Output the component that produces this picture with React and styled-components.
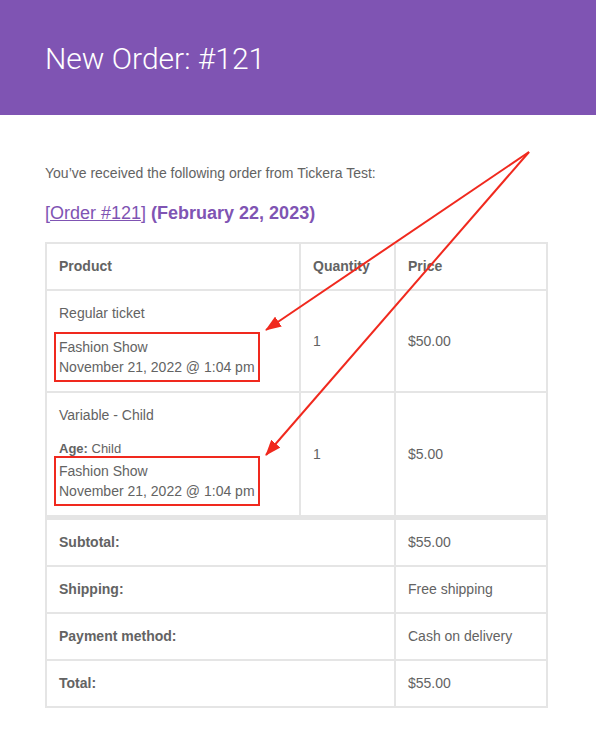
import React from 'react';
import styled, { createGlobalStyle } from 'styled-components';

const Global = createGlobalStyle`
  html, body { margin: 0; padding: 0; background: #ffffff; }
  body { font-family: "Liberation Sans", Arial, Helvetica, sans-serif; }
`;

const Page = styled.div`
  position: relative;
  width: 596px;
  min-height: 747px;
  background: #ffffff;
  color: #636363;
  font-size: 14px;
  overflow: hidden;
`;

const Header = styled.header`
  background: #7f54b3;
  height: 115px;
  box-sizing: border-box;
  padding: 2px 45px 0;
  display: flex;
  align-items: center;
`;

const Title = styled.h1`
  margin: 0;
  font-family: Roboto, "Liberation Sans", sans-serif;
  font-weight: 300;
  font-size: 30px;
  line-height: 1;
  color: #ffffff;
`;

const Body = styled.main`
  padding: 48px 48px 40px 45px;
`;

const Intro = styled.p`
  margin: 0 0 16px;
  line-height: 21px;
`;

const OrderHeading = styled.h2`
  margin: 0 0 16px;
  font-size: 18px;
  line-height: 26px;
  font-weight: bold;
  color: #7f54b3;
`;

const OrderLink = styled.a`
  color: inherit;
  font-weight: normal;
  text-decoration: underline;
`;

const Table = styled.table`
  width: 503px;
  border: 1px solid #e5e5e5;
  border-collapse: separate;
  border-spacing: 0;
  table-layout: fixed;
  color: #636363;
  font-size: 14px;
`;

const Th = styled.th`
  box-sizing: border-box;
  width: ${(p) => p.$w}px;
  border: 1px solid #e5e5e5;
  padding: 12px;
  text-align: left;
  vertical-align: middle;
  line-height: 21px;
  font-weight: bold;
`;

const Td = styled.td`
  box-sizing: border-box;
  border: 1px solid #e5e5e5;
  border-top-width: ${(p) => (p.$thick ? 4 : 1)}px;
  padding: 12px;
  text-align: left;
  vertical-align: middle;
  line-height: 21px;
  font-weight: ${(p) => (p.$bold ? 'bold' : 'normal')};
`;

const ItemName = styled.div`
  line-height: 20px;
`;

const ItemMeta = styled.div`
  margin-top: 15px;
  font-size: 13px;
  line-height: 18px;
`;

const MetaKey = styled.strong`
  font-weight: bold;
`;

const EventBlock = styled.div`
  width: fit-content;
  margin-top: ${(p) => p.$top}px;
  margin-bottom: 2px;
  line-height: 20px;
  outline: 2px solid #f0291e;
  outline-offset: 3px;
`;

const Annotations = styled.svg`
  position: absolute;
  left: 0;
  top: 0;
  width: 596px;
  height: 747px;
  pointer-events: none;
`;

const Event = ({ top }) => (
  <EventBlock $top={top}>
    <div>Fashion Show</div>
    <div>November 21, 2022 @ 1:04 pm</div>
  </EventBlock>
);

const totals = [
  ['Subtotal:', '$55.00'],
  ['Shipping:', 'Free shipping'],
  ['Payment method:', 'Cash on delivery'],
  ['Total:', '$55.00'],
];

export default function App() {
  return (
    <Page>
      <Global />
      <Header>
        <Title>New Order: #121</Title>
      </Header>
      <Body>
        <Intro>You’ve received the following order from Tickera Test:</Intro>
        <OrderHeading>
          <OrderLink href="#">[Order #121]</OrderLink> (February 22, 2023)
        </OrderHeading>
        <Table>
          <thead>
            <tr>
              <Th $w={254}>Product</Th>
              <Th $w={95}>Quantity</Th>
              <Th $w={152}>Price</Th>
            </tr>
          </thead>
          <tbody>
            <tr>
              <Td>
                <ItemName>Regular ticket</ItemName>
                <Event top={14} />
              </Td>
              <Td>1</Td>
              <Td>$50.00</Td>
            </tr>
            <tr>
              <Td>
                <ItemName>Variable - Child</ItemName>
                <ItemMeta>
                  <MetaKey>Age:</MetaKey> Child
                </ItemMeta>
                <Event top={3} />
              </Td>
              <Td>1</Td>
              <Td>$5.00</Td>
            </tr>
          </tbody>
          <tfoot>
            {totals.map(([label, value], i) => (
              <tr key={label}>
                <Td $bold $thick={i === 0} colSpan={2}>
                  {label}
                </Td>
                <Td $thick={i === 0}>{value}</Td>
              </tr>
            ))}
          </tfoot>
        </Table>
      </Body>
      <Annotations viewBox="0 0 596 747">
        <defs>
          <marker
            id="head"
            markerUnits="userSpaceOnUse"
            markerWidth="16"
            markerHeight="12"
            refX="15"
            refY="6"
            orient="auto"
          >
            <path d="M0,0 L16,6 L0,12 Z" fill="#f0291e" />
          </marker>
        </defs>
        <line x1="529" y1="152" x2="266" y2="330" stroke="#f0291e" strokeWidth="2" markerEnd="url(#head)" />
        <line x1="529" y1="152" x2="266" y2="455" stroke="#f0291e" strokeWidth="2" markerEnd="url(#head)" />
      </Annotations>
    </Page>
  );
}
